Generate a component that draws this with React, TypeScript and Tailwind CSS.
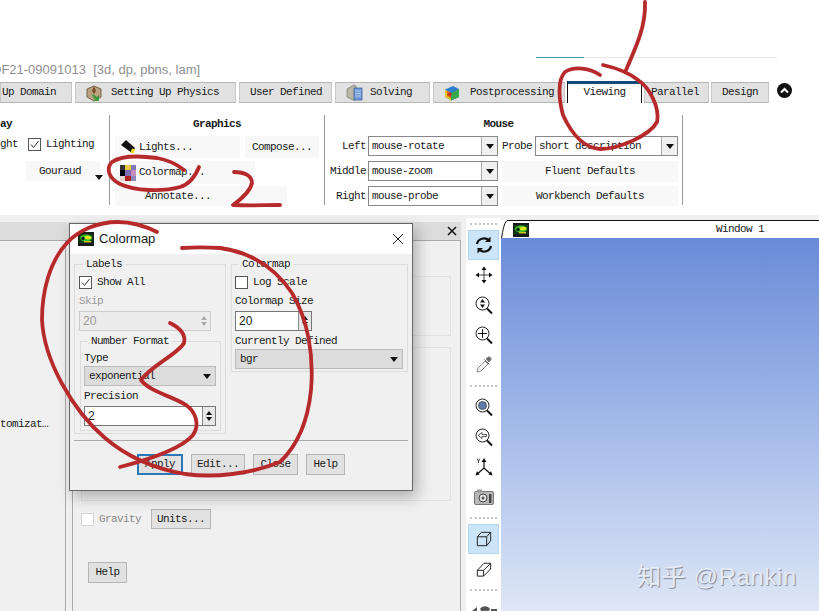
import React from 'react';

const mono = "font-['Liberation_Mono',monospace] text-[11px] tracking-[-0.6px] text-[#1a1a1a]";

const FluentIcon = () => (
  <svg width="16" height="14" viewBox="0 0 16 14" className="shrink-0">
    <rect width="16" height="14" fill="#1a1a1a" />
    <rect x="1" y="2" width="14" height="9" fill="#0d3b12" />
    <ellipse cx="8" cy="6" rx="6" ry="3.4" fill="#3fc02a" />
    <ellipse cx="10" cy="5.5" rx="3.4" ry="1.8" fill="#e6e21e" />
    <circle cx="5" cy="6.4" r="1.7" fill="#0b1c12" />
    <rect x="6" y="9" width="7" height="1.4" fill="#d8c020" />
  </svg>
);

const PhysicsIcon = () => (
  <svg width="18" height="18" viewBox="0 0 18 18" className="shrink-0">
    <path d="M2 5 9 2l7 3v8l-7 4-7-4z" fill="#b9a27f" stroke="#5c4a33" strokeWidth="0.8" />
    <path d="M9 2l2 5-2 3-2-3z" fill="#7a4e2a" />
    <path d="M8 10l4 3 2-2v6H8l2-2-3-3z" fill="#3f9b3a" />
  </svg>
);

const SolvingIcon = () => (
  <svg width="17" height="17" viewBox="0 0 17 17" className="shrink-0">
    <path d="M1 5 8 1l2 1v14H7L1 13z" fill="#b9b7a6" stroke="#6b6a5c" strokeWidth="0.6" />
    <rect x="8" y="4" width="8" height="12" fill="#6f9bd8" stroke="#33558c" strokeWidth="0.7" />
    <path d="M9.500 7h5M9.500 9.500h5M9.500 12h5" stroke="#fff" strokeWidth="1" strokeDasharray="1 1" />
  </svg>
);

const PostIcon = () => (
  <svg width="16" height="16" viewBox="0 0 16 16" className="shrink-0">
    <path d="M1 4.500 9 1l6 3v8l-8 3.500L1 12z" fill="#2f7fd0" />
    <path d="M1 4.500 7 8v7.500L1 12z" fill="#e8c320" />
    <path d="M3 6l4 2v5l-4-2z" fill="#e8572a" />
    <path d="M7 8l8-4v8l-8 3.500z" fill="#38a84a" />
    <circle cx="6" cy="9" r="1.500" fill="#c21f1f" />
  </svg>
);

const Arrow = () => <span className="w-0 h-0 border-x-[4px] border-x-transparent border-t-[5px] border-t-[#111]" />;

const Check = ({ on = true, dim = false }: { on?: boolean; dim?: boolean }) => (
  <span className={`w-[13px] h-[13px] border bg-white flex items-center justify-center shrink-0 ${dim ? 'border-[#d5d5d5]' : 'border-[#555]'}`}>
    {on && (
      <svg width="11" height="11" viewBox="0 0 11 11">
        <path d="M2 5.500 4.500 8.500 9.500 2" fill="none" stroke="#333" strokeWidth="1" />
      </svg>
    )}
  </span>
);

const Tab = ({ w, children, active, gap = 3 }: { w: string; children: React.ReactNode; active?: boolean; gap?: number }) =>
  active ? (
    <div className={`${w} h-[22px] -mt-[1px] border-x border-x-[#111] border-t-[3px] border-t-[#17497a] bg-white flex items-center justify-center ${gap === 3 ? 'mr-[3px]' : 'mr-[2px]'}`}>
      {children}
    </div>
  ) : (
    <div className={`${w} h-[21px] border-y border-y-[#b5b5b5] border-x border-x-[#c8c8c8] bg-[#e1e1e1] flex items-center ${gap === 3 ? 'mr-[3px]' : 'mr-[2px]'}`}>
      {children}
    </div>
  );

const RibbonButton = ({ className, children }: { className: string; children: React.ReactNode }) => (
  <div className={`bg-[#f8f8f8] flex items-center ${className}`}>{children}</div>
);

const Select = ({ w, children }: { w: string; children: React.ReactNode }) => (
  <div className={`${w} h-[20px] border border-[#888] bg-white flex`}>
    <span className="flex-1 pl-[3px] leading-[18px] whitespace-nowrap overflow-hidden">{children}</span>
    <span className="w-[16px] bg-[#f0f0f0] border-l border-[#aaa] flex items-center justify-center">
      <Arrow />
    </span>
  </div>
);

const Combo = ({ w, children }: { w: string; children: React.ReactNode }) => (
  <div className={`${w} h-[20px] border border-[#bbb] bg-[#dcdcdc] flex items-center justify-between px-[4px]`}>
    <span>{children}</span>
    <Arrow />
  </div>
);

const Spin = ({ w, value, dim }: { w: string; value: string; dim?: boolean }) => (
  <div className={`${w} h-[20px] border flex items-stretch ${dim ? 'border-[#ccc] bg-[#ececec] text-[#999]' : 'border-[#777] bg-white'}`}>
    <span className="flex-1 pl-[3px] leading-[18px] font-['Liberation_Sans',sans-serif] text-[12px] tracking-normal">{value}</span>
    <span className={`w-[13px] flex flex-col items-center justify-center gap-[2px] ${dim ? 'bg-[#ececec]' : 'bg-[#e6e6e6] border-l border-[#888]'}`}>
      <span className={`w-0 h-0 border-x-[3px] border-x-transparent border-b-[4px] ${dim ? 'border-b-[#aaa]' : 'border-b-[#111]'}`} />
      <span className={`w-0 h-0 border-x-[3px] border-x-transparent border-t-[4px] ${dim ? 'border-t-[#aaa]' : 'border-t-[#111]'}`} />
    </span>
  </div>
);

const Group = ({ title, className, titleClass, children }: { title: string; className: string; titleClass: string; children: React.ReactNode }) => (
  <div className={`relative border border-[#dcdcdc] ${className}`}>
    <span className={`absolute -top-[7px] bg-[#f0f0f0] px-[3px] leading-[12px] ${titleClass}`}>{title}</span>
    {children}
  </div>
);

const DialogButton = ({ w, children, focus }: { w: string; children: React.ReactNode; focus?: boolean }) => (
  <div className={`${w} h-[21px] flex items-center justify-center ${focus ? 'border-2 border-[#2a78b8] bg-[#e1e1e1]' : 'border border-[#b5b5b5] bg-[#e1e1e1]'}`}>
    {children}
  </div>
);

const Magnifier = ({ children }: { children?: React.ReactNode }) => (
  <svg width="20" height="20" viewBox="0 0 20 20">
    <circle cx="8.500" cy="8.500" r="6.500" fill="#fff" stroke="#222" strokeWidth="1" />
    <path d="M13 13.500 18 18.500" stroke="#111" strokeWidth="2" />
    {children}
  </svg>
);

const Dots = ({ h }: { h: string }) => (
  <div className={`${h} shrink-0 flex items-center justify-center`}>
    <div className="w-[27px] border-t-2 border-dotted border-[#c4c4c4]" />
  </div>
);

const ToolItem = ({ active, children }: { active?: boolean; children: React.ReactNode }) => (
  <div className={`w-[31px] h-[30px] flex items-center justify-center shrink-0 ${active ? 'bg-[#cbe4f8] border border-[#b4d6f0]' : ''}`}>
    {children}
  </div>
);

const Toolbar = () => (
  <div className="w-[35px] ml-[5px] mt-[3px] bg-white flex flex-col items-center overflow-hidden">
    <Dots h="h-[12px]" />
    <ToolItem active>
      <svg width="20" height="20" viewBox="0 0 20 20" fill="none" stroke="#111" strokeWidth="2.200">
        <path d="M3 9a7 6.500 0 0 1 12-3.500" />
        <path d="M17 11a7 6.500 0 0 1-12 3.500" />
        <path d="M16.500 1.500v5.500h-5.500z" fill="#111" stroke="none" />
        <path d="M3.500 18.500V13h5.500z" fill="#111" stroke="none" />
      </svg>
    </ToolItem>
    <ToolItem>
      <svg width="18" height="18" viewBox="0 0 18 18" fill="#111" stroke="#111">
        <path d="M9 3v12M3 9h12" strokeWidth="0.8" />
        <path d="M9 0.500 11.500 4h-5zM9 17.500 6.500 14h5zM0.500 9 4 6.500v5zM17.500 9 14 11.500v-5z" stroke="none" />
      </svg>
    </ToolItem>
    <ToolItem>
      <Magnifier>
        <path d="M8.500 4 11 7.500H6zM8.500 13 6 9.500h5z" fill="#111" />
      </Magnifier>
    </ToolItem>
    <ToolItem>
      <Magnifier>
        <path d="M8.500 4v9M4 8.500h9" stroke="#111" />
      </Magnifier>
    </ToolItem>
    <ToolItem>
      <svg width="18" height="18" viewBox="0 0 18 18" fill="none" stroke="#8a8a8a">
        <path d="M2 16l1-4 7-7 3 3-7 7z" fill="#f3f3f3" />
        <path d="M11 3l1.500-1.500a1.500 1.500 0 0 1 3 3L14 6z" fill="#666" />
        <path d="M9.500 3.500 14.500 8.500" stroke="#666" />
      </svg>
    </ToolItem>
    <Dots h="h-[12px]" />
    <ToolItem>
      <Magnifier>
        <circle cx="8.500" cy="8.500" r="4" fill="#5f7fa8" stroke="#222" strokeWidth="0.6" />
      </Magnifier>
    </ToolItem>
    <ToolItem>
      <Magnifier>
        <path d="M4 8.500 8 5.500v2h4.500v2H8v2z" fill="#fff" stroke="#333" strokeWidth="0.8" />
      </Magnifier>
    </ToolItem>
    <ToolItem>
      <svg width="20" height="20" viewBox="0 0 20 20" fill="#111" stroke="#111">
        <path d="M10 3v8L3.500 17M10 11l6.500 6" fill="none" strokeWidth="1.200" />
        <path d="M10 1 12.500 5h-5zM1.500 18.500 3 14l2.500 3.500zM18.500 18.500 17 14l-2.500 3.500z" stroke="none" />
        <path d="M3 1.500 4.500 4 6 1.500M4.500 4v2" fill="none" strokeWidth="0.8" />
      </svg>
    </ToolItem>
    <ToolItem>
      <svg width="20" height="16" viewBox="0 0 20 16">
        <rect x="0.500" y="2.500" width="19" height="13" rx="1.500" fill="#b8b8b8" stroke="#777" />
        <rect x="3" y="0.500" width="5" height="3" fill="#999" />
        <circle cx="9" cy="9" r="4" fill="#e2e2e2" stroke="#444" />
        <circle cx="9" cy="9" r="1.500" fill="#555" />
        <rect x="15" y="5" width="2.500" height="9" fill="#444" />
      </svg>
    </ToolItem>
    <Dots h="h-[12px]" />
    <ToolItem active>
      <svg width="16" height="16" viewBox="0 0 18 18" fill="none" stroke="#222" strokeWidth="1.100">
        <path d="M1.500 6.500h10.500v10H1.500zM1.500 6.500 6 1.500h10.500L12 6.500M16.500 1.500v9.500L12 16.500" />
      </svg>
    </ToolItem>
    <ToolItem>
      <svg width="16" height="16" viewBox="0 0 18 18" fill="none" stroke="#222" strokeWidth="1.100">
        <path d="M1.500 10.500h7v6.500h-7zM1.500 10.500 9 2.500h7.500L8.500 10.500M16.500 2.500V9l-8 8" />
      </svg>
    </ToolItem>
    <Dots h="h-[12px]" />
    <ToolItem>
      <svg width="26" height="20" viewBox="0 0 26 20" fill="#555">
        <path d="M1 10 6 6v8zM9 8a6 6 0 0 1 10 0l-2 3a4 4 0 0 0-6 0z" />
        <rect x="20" y="8" width="6" height="3" />
      </svg>
    </ToolItem>
  </div>
);

const Strokes = () => (
  <svg className="absolute inset-0 pointer-events-none" width="819" height="611" viewBox="0 0 819 611" fill="none" stroke="#b72a2c" strokeWidth="3.800" strokeLinecap="round" strokeLinejoin="round">
    <path d="M645 2C646 25 637 45 626 70" />
    <path d="M600 75C590 68 574 66 565 72C557 80 559 100 563 115C572 135 585 148 600 149C620 149 650 135 657 122C660 108 650 88 638 80C628 72 612 67 603 65" />
    <path d="M199 167C195 177 190 184 180 187C162 192 135 191 120 184C108 178 106 168 112 162C122 155 142 156 157 158C168 160 178 165 184 170" />
    <path d="M234 172C245 172 252 176 252 183C250 192 240 200 233 205C250 206 265 205 280 205" />
    <path d="M157 232C145 226 133 222 118 222C98 222 78 230 66 244C50 262 42 290 42 320C44 360 72 410 105 438C125 455 150 468 185 474C215 478 250 474 280 462C298 445 308 420 311 390C314 355 308 320 292 293C275 268 250 252 220 248C205 247 195 247 182 248" />
    <path d="M170 323C180 328 186 335 184 343C178 354 152 365 141 380C150 392 172 396 186 405C196 412 200 425 193 435C182 448 155 458 120 467" />
  </svg>
);

const App = () => (
  <div className={`relative w-[819px] h-[611px] overflow-hidden bg-white flex flex-col ${mono}`}>
    {/* title strip */}
    <div className="h-[82px] shrink-0 flex flex-col">
      <div className="h-[58px] flex items-end pl-[536px]">
        <div className="w-[48px] border-t border-[#4a9bb0]" />
        <div className="w-[193px] border-t border-[#e6e6e6]" />
      </div>
      <div className="-ml-[8px] mt-[4px] font-['Liberation_Sans',sans-serif] text-[13px] tracking-normal leading-[16px] text-[#8f8f8f] whitespace-pre">
        DF21-09091013  [3d, dp, pbns, lam]
      </div>
    </div>

    {/* ribbon tabs */}
    <div className="h-[21px] shrink-0 flex">
      <Tab w="w-[72px]"><span className="pl-[1px]">Up Domain</span></Tab>
      <Tab w="w-[161px]"><span className="pl-[9px] pr-[8px]"><PhysicsIcon /></span>Setting Up Physics</Tab>
      <Tab w="w-[93px]"><span className="pl-[10px]">User Defined</span></Tab>
      <Tab w="w-[95px]"><span className="pl-[10px] pr-[7px]"><SolvingIcon /></span>Solving</Tab>
      <Tab w="w-[132px]" gap={2}><span className="pl-[10px] pr-[10px]"><PostIcon /></span>Postprocessing</Tab>
      <Tab w="w-[75px]" active gap={2}><span className="-mt-[3px]">Viewing</span></Tab>
      <Tab w="w-[65px]" gap={2}><span className="pl-[6px]">Parallel</span></Tab>
      <Tab w="w-[58px]"><span className="pl-[10px]">Design</span></Tab>
      <div className="ml-[5px] mt-[1px] w-[15px] h-[15px] rounded-full bg-[#111] flex items-center justify-center">
        <svg width="9" height="7" viewBox="0 0 9 7"><path d="M1 5.500 4.500 2 8 5.500" fill="none" stroke="#fff" strokeWidth="2" /></svg>
      </div>
    </div>

    {/* ribbon */}
    <div className="h-[112px] shrink-0 pt-[12px] flex">
      <div className="w-[110px] h-[90px] border-r border-[#999] relative">
        <div className="font-bold leading-[18px]">ay</div>
        <div className="flex items-center mt-[2px] h-[18px]">
          <span className="mr-[10px]">ght</span>
          <Check />
          <span className="ml-[5px]">Lighting</span>
        </div>
        <div className="flex mt-[8px]">
          <div className="ml-[26px] w-[74px] h-[20px] bg-[#f8f8f8] pl-[13px] leading-[20px]">Gouraud</div>
          <span className="mt-[17px] -ml-[5px]"><Arrow /></span>
        </div>
      </div>
      <div className="w-[215px] h-[90px] border-r border-[#999] pl-[5px]">
        <div className="font-bold leading-[18px] text-center pr-[5px]">Graphics</div>
        <div className="flex gap-[5px] mt-[3px]">
          <RibbonButton className="w-[125px] h-[22px] pl-[5px] gap-[3px]">
            <svg width="16" height="16" viewBox="0 0 16 16"><path d="M1 6 6 1l9 8-3 5z" fill="#111" /><path d="M12 9.500l3 1-1.500 4-3-1z" fill="#f0d820" /></svg>
            Lights...
          </RibbonButton>
          <RibbonButton className="w-[74px] h-[22px] justify-center">Compose...</RibbonButton>
        </div>
        <RibbonButton className="w-[140px] h-[23px] mt-[3px] pl-[5px] gap-[3px]">
          <svg width="16" height="16" viewBox="0 0 3 3" shapeRendering="crispEdges">
            <rect width="1" height="1" fill="#333" /><rect x="1" width="1" height="1" fill="#e8c840" /><rect x="2" width="1" height="1" fill="#7f78b8" />
            <rect y="1" width="1" height="1" fill="#000" /><rect x="1" y="1" width="1" height="1" fill="#7e6db5" /><rect x="2" y="1" width="1" height="1" fill="#c48fc0" />
            <rect y="2" width="1" height="1" fill="#e7d4cf" /><rect x="1" y="2" width="1" height="1" fill="#b02020" /><rect x="2" y="2" width="1" height="1" fill="#8a8ac0" />
          </svg>
          Colormap...
        </RibbonButton>
        <RibbonButton className="w-[172px] h-[20px] mt-[2px] pl-[30px]">Annotate...</RibbonButton>
      </div>
      <div className="w-[358px] h-[90px] border-r border-[#999]">
        <div className="font-bold leading-[18px] text-center pl-[3px] pr-[13px]">Mouse</div>
        <div className="flex mt-[3px] h-[22px] items-start">
          <span className="w-[43px] text-right leading-[20px] pr-[2px]">Left</span>
          <Select w="w-[130px]">mouse-rotate</Select>
          <span className="ml-[4px] w-[33px] leading-[20px]">Probe</span>
          <Select w="w-[143px]">short description</Select>
        </div>
        <div className="flex mt-[3px] h-[22px] items-start">
          <span className="w-[43px] text-right leading-[20px] pr-[2px] whitespace-nowrap">Middle</span>
          <Select w="w-[130px]">mouse-zoom</Select>
          <div className="ml-[4px] w-[176px] h-[21px] bg-[#f8f8f8] text-center leading-[20px]">Fluent Defaults</div>
        </div>
        <div className="flex mt-[3px] h-[22px] items-start">
          <span className="w-[43px] text-right leading-[20px] pr-[2px]">Right</span>
          <Select w="w-[130px]">mouse-probe</Select>
          <div className="ml-[4px] w-[176px] h-[20px] bg-[#f8f8f8] text-center leading-[20px]">Workbench Defaults</div>
        </div>
      </div>
    </div>

    {/* main body */}
    <div className="flex-1 min-h-0 bg-[#f0f0f0] flex">
      <div className="w-[461px] pt-[7px] shrink-0 flex flex-col">
        <div className="h-[19px] bg-[#dcdcdc] border-b border-[#aaa] flex items-center justify-end pr-[4px]">
          <svg width="10" height="10" viewBox="0 0 10 10"><path d="M1 1l8 8M9 1l-8 8" stroke="#111" strokeWidth="1.500" /></svg>
        </div>
        <div className="flex-1 flex border-r border-[#aaa]">
          <div className="w-[66px] border-r border-[#aaa] pt-[177px] whitespace-nowrap leading-[12px]">tomizat…</div>
          <div className="w-[6px]" />
          <div className="flex-1 border-l border-[#aaa] pt-[35px] pl-[8px] pr-[9px]">
            <div className="h-[60px] border border-[#e2e2e2]" />
            <div className="h-[154px] mt-[11px] border border-[#e2e2e2]" />
            <div className="flex items-center mt-[8px] h-[20px] text-[#888]">
              <Check on={false} dim />
              <span className="ml-[5px] w-[52px] whitespace-nowrap">Gravity</span>
              <div className="w-[60px] h-[20px] border border-[#b5b5b5] bg-[#e1e1e1] text-[#1a1a1a] text-center leading-[19px]">Units...</div>
            </div>
            <div className="w-[39px] h-[21px] mt-[33px] ml-[7px] border border-[#b5b5b5] bg-[#e1e1e1] text-center leading-[19px]">Help</div>
          </div>
        </div>
      </div>
      <Toolbar />
      <div className="flex-1 min-w-0 flex flex-col pt-[5px]">
        <div className="h-[18px] bg-white flex items-center">
          <svg width="6" height="18" viewBox="0 0 6 18" className="shrink-0">
            <path d="M0.500 18C2 10 3 3 6 0.500" fill="none" stroke="#111" />
          </svg>
          <div className="flex-1 h-full border-t border-[#111] flex items-center">
            <span className="ml-[6px]"><FluentIcon /></span>
            <span className="ml-[187px] whitespace-nowrap">Window 1</span>
          </div>
        </div>
        <div className="flex-1 bg-gradient-to-b from-[#6a8bd8] to-[#dfe7f6]" />
      </div>
    </div>

    {/* Colormap dialog */}
    <div className="absolute left-[69px] top-[223px] w-[344px] h-[268px] border border-[#666] bg-[#f0f0f0] shadow-[4px_6px_14px_rgba(0,0,0,0.28)] flex flex-col">
      <div className="h-[30px] bg-white shrink-0 flex items-center pl-[8px] pr-[8px] font-['Liberation_Sans',sans-serif] text-[13px] tracking-normal">
        <FluentIcon />
        <span className="ml-[5px] flex-1">Colormap</span>
        <svg width="12" height="12" viewBox="0 0 12 12"><path d="M1 1l10 10M11 1 1 11" stroke="#222" strokeWidth="1" /></svg>
      </div>
      <div className="flex gap-[5px] pl-[4px] pt-[10px]">
        <Group title="Labels" titleClass="left-[8px]" className="w-[152px] h-[170px] px-[4px] pt-[11px]">
          <div className="flex items-center h-[13px]"><Check /><span className="ml-[5px]">Show All</span></div>
          <div className="mt-[6px] leading-[12px] text-[#999]">Skip</div>
          <div className="mt-[4px]"><Spin w="w-[132px]" value="20" dim /></div>
          <Group title="Number Format" titleClass="left-[7px]" className="mt-[10px] ml-[1px] w-[141px] h-[90px] px-[3px] pt-[10px]">
            <div className="leading-[12px]">Type</div>
            <div className="mt-[2px]"><Combo w="w-[132px]">exponential</Combo></div>
            <div className="mt-[4px] leading-[12px]">Precision</div>
            <div className="mt-[4px]"><Spin w="w-[132px]" value="2" /></div>
          </Group>
        </Group>
        <Group title="Colormap" titleClass="left-[7px]" className="w-[177px] h-[108px] px-[3px] pt-[11px]">
          <div className="flex items-center h-[13px]"><Check on={false} /><span className="ml-[5px]">Log Scale</span></div>
          <div className="mt-[6px] leading-[12px]">Colormap Size</div>
          <div className="mt-[4px]"><Spin w="w-[77px]" value="20" /></div>
          <div className="mt-[4px] leading-[12px]">Currently Defined</div>
          <div className="mt-[2px]"><Combo w="w-[168px]">bgr</Combo></div>
        </Group>
      </div>
      <div className="mt-[6px] mx-[4px] border-t border-[#aaa]" />
      <div className="flex mt-[13px] pl-[67px] gap-[8px]">
        <DialogButton w="w-[46px]" focus>Apply</DialogButton>
        <DialogButton w="w-[54px]">Edit...</DialogButton>
        <DialogButton w="w-[45px]">Close</DialogButton>
        <DialogButton w="w-[39px]">Help</DialogButton>
      </div>
    </div>

    {/* hand-drawn marks on the screenshot */}
    <Strokes />

    {/* watermark */}
    <div className="absolute left-[637px] top-[562px] font-['Liberation_Sans','Noto_Sans_CJK_SC',sans-serif] text-[24px] leading-[30px] tracking-[0.6px] text-[#e6ebf6] [text-shadow:1px_1px_1px_#7d8699] whitespace-nowrap">
      知乎 @Rankin
    </div>
  </div>
);

export default App;
